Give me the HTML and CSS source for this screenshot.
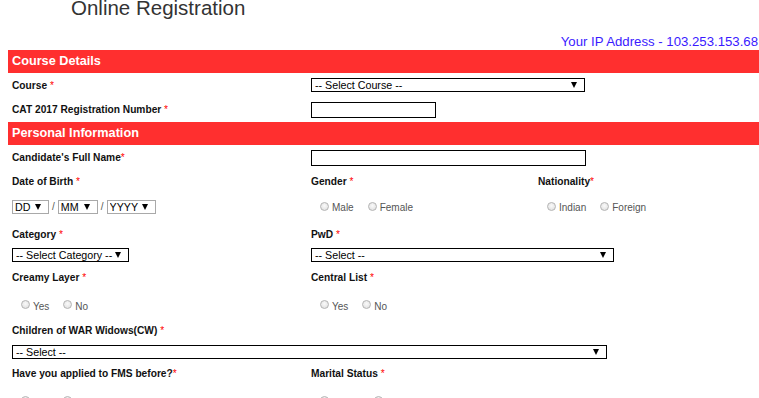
FILE: index.html
```html
<!DOCTYPE html>
<html lang="en">
<head>
    <meta charset="UTF-8">
    <title>Online Registration</title>

    <link rel="stylesheet" href="styles.css">
</head>
<body>
    <div class="page">
        <h1 class="title">Online Registration</h1>
        <p class="ip">Your IP Address - 103.253.153.68</p>

        <h2 class="bar">Course Details</h2>
        <div class="grid course-grid">
            <label class="lbl">Course <span class="req">*</span></label>
            <select class="sel course-sel span-2"><option>-- Select Course --</option></select>

            <label class="lbl">CAT 2017 Registration Number <span class="req">*</span></label>
            <input type="text" class="txt cat-txt span-2">
        </div>

        <h2 class="bar">Personal Information</h2>
        <div class="grid personal-grid">
            <label class="lbl">Candidate's Full Name<span class="req">*</span></label>
            <input type="text" class="txt name-txt span-2">

            <label class="lbl">Date of Birth <span class="req">*</span></label>
            <label class="lbl">Gender <span class="req">*</span></label>
            <label class="lbl">Nationality<span class="req">*</span></label>

            <div class="dob">
                <select class="sel dd-sel soft"><option>DD</option></select>
                <span class="slash">/</span>
                <select class="sel mm-sel soft"><option>MM</option></select>
                <span class="slash">/</span>
                <select class="sel yy-sel soft"><option>YYYY</option></select>
            </div>
            <div class="radios">
                <label class="opt"><input type="radio" name="gender"><span>Male</span></label>
                <label class="opt"><input type="radio" name="gender"><span>Female</span></label>
            </div>
            <div class="radios">
                <label class="opt"><input type="radio" name="nation"><span>Indian</span></label>
                <label class="opt"><input type="radio" name="nation"><span>Foreign</span></label>
            </div>

            <label class="lbl">Category <span class="req">*</span></label>
            <label class="lbl span-2">PwD <span class="req">*</span></label>

            <select class="sel cat-sel"><option>-- Select Category --</option></select>
            <select class="sel pwd-sel span-2"><option>-- Select --</option></select>

            <label class="lbl">Creamy Layer <span class="req">*</span></label>
            <label class="lbl span-2">Central List <span class="req">*</span></label>

            <div class="radios">
                <label class="opt"><input type="radio" name="creamy"><span>Yes</span></label>
                <label class="opt"><input type="radio" name="creamy"><span>No</span></label>
            </div>
            <div class="radios span-2">
                <label class="opt"><input type="radio" name="central"><span>Yes</span></label>
                <label class="opt"><input type="radio" name="central"><span>No</span></label>
            </div>

            <label class="lbl span-3">Children of WAR Widows(CW) <span class="req">*</span></label>

            <select class="sel cw-sel span-3"><option>-- Select --</option></select>

            <label class="lbl">Have you applied to FMS before?<span class="req">*</span></label>
            <label class="lbl span-2">Marital Status <span class="req">*</span></label>

            <div class="radios">
                <label class="opt"><input type="radio" name="fms"><span>Yes</span></label>
                <label class="opt"><input type="radio" name="fms"><span>No</span></label>
            </div>
            <div class="radios span-2">
                <label class="opt"><input type="radio" name="marital"><span>Single</span></label>
                <label class="opt"><input type="radio" name="marital"><span>Married</span></label>
            </div>
        </div>
    </div>
</body>
</html>
```

FILE: styles.css
```css
html, body {
    margin: 0;
}

body {
    background: #fff;
    font-family: "Liberation Sans", Arial, sans-serif;
    color: #000;
    overflow: hidden;
}

.page {
    margin-left: 8px;
}

.title {
    margin: -4px 0 0;
    padding-left: 63px;
    font-size: 20.5px;
    line-height: 24px;
    font-weight: normal;
    color: #333;
}

.ip {
    margin: 14px 0 1px;
    padding-right: 1px;
    text-align: right;
    font-size: 13.2px;
    line-height: 15px;
    color: #3a1aff;
}

.bar {
    margin: 0;
    height: 23px;
    padding-left: 4px;
    background: #ff2f2f;
    color: #fff;
    font-size: 12.7px;
    line-height: 23px;
    font-weight: bold;
}

.grid {
    display: grid;
    grid-template-columns: 299px 227px 1fr;
    align-items: center;
    justify-items: start;
}

.grid > * {
    margin-left: 4px;
}

.course-grid {
    grid-template-rows: 24px 25px;
}

.personal-grid {
    grid-template-rows: 25px 22px 29px 26px 15px 30px 26px 25px 18px 24px 32px;
}

.span-2 { grid-column: span 2; }
.span-3 { grid-column: 1 / -1; }

.lbl {
    font-size: 10.2px;
    font-weight: bold;
    color: #111;
    white-space: nowrap;
}

.req {
    color: #f00;
    font-weight: normal;
}

/* inputs */
.txt {
    box-sizing: border-box;
    height: 16px;
    margin-top: 0;
    margin-bottom: 0;
    padding: 0 2px;
    border: 1px solid #000;
    border-radius: 0;
    background: #fff;
    font: 11px "Liberation Sans", Arial, sans-serif;
    outline: none;
}

.cat-txt { width: 125px; }
.name-txt { width: 275px; }

.sel {
    -webkit-appearance: none;
    appearance: none;
    box-sizing: border-box;
    height: 14px;
    margin-top: 0;
    margin-bottom: 0;
    padding: 0 14px 0 3px;
    border: 1px solid #000;
    border-radius: 0;
    background: #fff url("data:image/svg+xml,%3Csvg xmlns='http://www.w3.org/2000/svg' width='6' height='6'%3E%3Cpath d='M0 0h6L3 6z' fill='%23000'/%3E%3C/svg%3E") no-repeat right 7px center;
    font: 10.7px "Liberation Sans", Arial, sans-serif;
    line-height: 12px;
    color: #000;
    outline: none;
}

.sel.soft {
    border-color: #a9a9a9;
    padding-left: 2px;
}

.course-sel { width: 274px; }
.cat-sel { width: 117px; }
.pwd-sel { width: 303px; }
.cw-sel { width: 595px; }
.dd-sel { width: 37px; }
.mm-sel { width: 40px; }
.yy-sel { width: 49px; }

.dob {
    display: flex;
    align-items: center;
    gap: 3px;
}

.slash {
    font-size: 10px;
    color: #555;
}

/* radio groups */
.radios {
    display: flex;
    align-items: center;
    gap: 14px;
    padding-left: 9px;
    padding-top: 2px;
}

.opt {
    display: flex;
    align-items: center;
    font-size: 10px;
    color: #555;
}

.opt input {
    -webkit-appearance: none;
    appearance: none;
    box-sizing: border-box;
    width: 9px;
    height: 9px;
    margin: 0 3px 3px 0;
    border: 1px solid #b4b4b4;
    border-radius: 50%;
    background: radial-gradient(circle at 50% 40%, #fafafa, #dcdcdc);
}
```
